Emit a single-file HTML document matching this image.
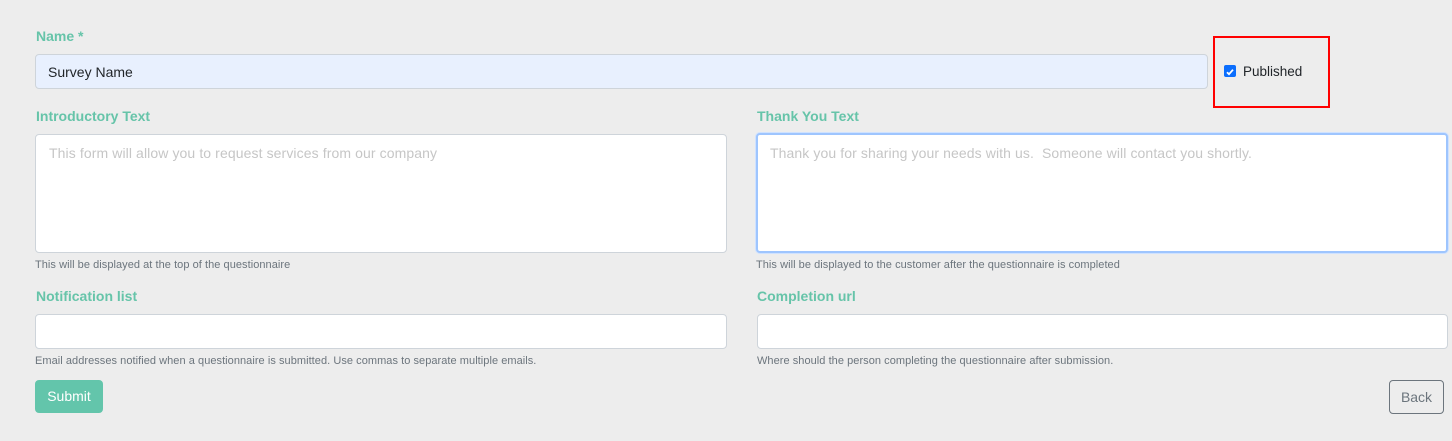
<!DOCTYPE html>
<html><head><style>
body{margin:0;width:1452px;height:441px;background:#ededed;font-family:"Liberation Sans",sans-serif;position:relative;overflow:hidden}
.a{position:absolute}
.lbl{font-size:14px;font-weight:bold;color:#66c4a9}
.box{position:absolute;background:#fff;border:1px solid #ced4da;border-radius:4px;box-sizing:border-box}
.ph{font-size:14px;color:#c6c6c6;letter-spacing:0.1px}
.help{font-size:11px;color:#6c757d;letter-spacing:0.05px}
</style></head><body>
<div class="a lbl" style="left:36px;top:28px">Name *</div>
<div class="box" style="left:35px;top:54px;width:1173px;height:35px;background:#e8f0fe"></div>
<div class="a" style="left:48px;top:64px;font-size:14px;color:#212529">Survey Name</div>
<div class="a" style="left:1213px;top:36px;width:113px;height:68px;border:2px solid #f00"></div>
<div class="a" style="left:1224px;top:65px;width:12px;height:12px;background:#0b6efd;border-radius:2px"><svg width="12" height="12"><path d="M3 6.2l2 2 4-4.5" stroke="#fff" stroke-width="1.8" fill="none"/></svg></div>
<div class="a" style="left:1243px;top:64px;font-size:13.5px;color:#212529">Published</div>

<div class="a lbl" style="left:36px;top:108px">Introductory Text</div>
<div class="box" style="left:35px;top:134px;width:692px;height:119px"></div>
<div class="a ph" style="left:49px;top:145px">This form will allow you to request services from our company</div>
<div class="a help" style="left:35px;top:259px">This will be displayed at the top of the questionnaire</div>

<div class="a lbl" style="left:757px;top:108px">Thank You Text</div>
<div class="box" style="left:756px;top:133px;width:692px;height:120px;border:2px solid #9ec5fe;box-shadow:0 0 0 1px #cfe2ff"></div>
<div class="a ph" style="left:770px;top:145px">Thank you for sharing your needs with us.&nbsp; Someone will contact you shortly.</div>
<div class="a help" style="left:756px;top:259px">This will be displayed to the customer after the questionnaire is completed</div>

<div class="a lbl" style="left:36px;top:288px">Notification list</div>
<div class="box" style="left:35px;top:314px;width:692px;height:35px"></div>
<div class="a help" style="left:35px;top:355px">Email addresses notified when a questionnaire is submitted. Use commas to separate multiple emails.</div>

<div class="a lbl" style="left:757px;top:288px">Completion url</div>
<div class="box" style="left:757px;top:314px;width:691px;height:35px"></div>
<div class="a help" style="left:757px;top:355px">Where should the person completing the questionnaire after submission.</div>

<div class="a" style="left:35px;top:380px;width:68px;height:33px;background:#63c5ab;border-radius:4px;color:#fff;font-size:14px;line-height:33px;text-align:center">Submit</div>
<div class="a" style="left:1389px;top:380px;width:55px;height:34px;border:1px solid #6c757d;border-radius:4px;box-sizing:border-box;color:#6c757d;font-size:14px;line-height:32px;text-align:center">Back</div>
</body></html>
